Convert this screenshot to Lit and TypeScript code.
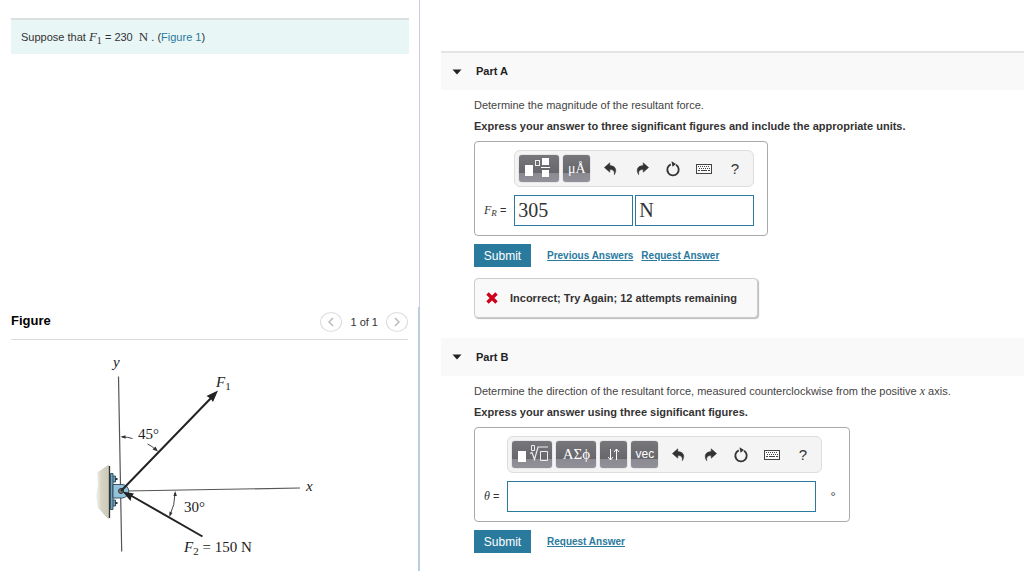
import { LitElement, html, css, svg, nothing } from "lit";
import { customElement, property } from "lit/decorators.js";

const undo = svg`<path d="M5.8 .8 .4 5.6l5.4 4.6V7.600c3.400-.1 5 1.400 4.500 5.200 3-4.600 1.400-9-4.500-9.200z" stroke="#333" stroke-width=".5"/>`;

const icons = {
  undo: html`<svg width="14" height="14" viewBox="0 0 14 14" fill="#333" aria-hidden="true">${undo}</svg>`,
  redo: html`<svg width="14" height="14" viewBox="0 0 14 14" fill="#333" aria-hidden="true"><g transform="translate(14 0) scale(-1 1)">${undo}</g></svg>`,
  reset: html`<svg width="16" height="16" viewBox="0 0 16 16" aria-hidden="true">
    <path d="M11 3.800A5.700 5.700 0 1 1 5.800 3.400" fill="none" stroke="#333" stroke-width="1.800"/>
    <path d="M6.500 .2 11 2.900 7.500 5.700z" fill="#333"/>
  </svg>`,
  keyboard: html`<svg width="16" height="10" viewBox="0 0 16 10" aria-hidden="true">
    <rect x=".5" y=".5" width="15" height="9" fill="#fafafa" stroke="#444"/>
    <path d="M2 2.500h12M3 4.500h11" stroke="#444" stroke-dasharray="1 1" fill="none"/>
    <path d="M2 6.500h2M5 6.500h6M12 6.500h2" stroke="#444" fill="none"/>
  </svg>`,
  fraction: html`<svg width="40" height="27" viewBox="0 0 40 27" aria-hidden="true">
    <path d="M6 10h8v11H6zM23 3h7v7h-7zM23 15h7v7h-7zM22 12h9v1h-9z" fill="#fff"/>
    <rect x="16.5" y="5.5" width="4" height="5" fill="none" stroke="#eee"/>
  </svg>`,
  root: html`<svg width="40" height="27" viewBox="0 0 40 27" aria-hidden="true">
    <path d="M6 10h8v11H6z" fill="#fff"/>
    <path d="M18 12.500l2-1 2.500 7 3.500-12.500h10" fill="none" stroke="#eee" stroke-width="1.2"/>
    <path d="M19.500 4.500h3v5h-3zM28.500 10.500h7v9h-7z" fill="none" stroke="#eee"/>
  </svg>`,
  arrows: html`<svg width="27" height="27" viewBox="0 0 27 27" fill="none" stroke="#fff" aria-hidden="true">
    <path d="M10.500 8v11M8 16l2.500 3 2.500-3M16.500 19V8M14 11l2.500-3 2.500 3"/>
  </svg>`,
};

@customElement("math-toolbar")
class MathToolbar extends LitElement {
  @property() kind = "units";

  static styles = css`
    :host { display: block; }
    .bar {
      display: flex;
      align-items: center;
      box-sizing: border-box;
      height: 37px;
      padding: 0 3px 0 4px;
      border: 1px solid #ddd;
      border-radius: 6px;
      background: #f4f4f4;
    }
    .keys { display: flex; gap: 4px; margin-right: 5px; }
    button {
      display: flex;
      align-items: center;
      justify-content: center;
      padding: 0;
      border: 0;
      background: none;
      color: #333;
      cursor: pointer;
    }
    .key {
      width: 27px;
      height: 27px;
      border-radius: 3px;
      background: linear-gradient(#77767b, #67666b 67%, #8b8a92 68%, #929199);
      box-shadow: 0 0 1px #77767b;
      color: #fff;
      font: 14px/27px "Liberation Serif", serif;
    }
    .wide { width: 40px; }
    .greek { font-size: 15px; }
    .vec { font: 12px/27px "Liberation Sans", sans-serif; }
    .tool { width: 31px; height: 27px; }
    .help { font: 15px/27px "Liberation Sans", sans-serif; }
  `;

  render() {
    return html`
      <div class="bar" role="toolbar">
        <div class="keys">
          ${this.kind === "units"
            ? html`
                <button class="key wide" aria-label="Templates">${icons.fraction}</button>
                <button class="key">μÅ</button>`
            : html`
                <button class="key wide" aria-label="Templates">${icons.root}</button>
                <button class="key wide greek">ΑΣϕ</button>
                <button class="key" aria-label="Arrows">${icons.arrows}</button>
                <button class="key vec">vec</button>`}
        </div>
        <button class="tool" aria-label="Undo">${icons.undo}</button>
        <button class="tool" aria-label="Redo">${icons.redo}</button>
        <button class="tool" aria-label="Reset">${icons.reset}</button>
        <button class="tool" aria-label="Keyboard">${icons.keyboard}</button>
        <button class="tool help">?</button>
      </div>
    `;
  }
}

@customElement("force-figure")
class ForceFigure extends LitElement {
  static styles = css`
    :host { display: block; }
    svg { display: block; }
    text { font: 15px "Liberation Serif", serif; fill: #222; }
    .it { font-style: italic; }
    .sub { font-size: 11px; }
  `;

  render() {
    return html`
      <svg width="397" height="231" viewBox="11 340 397 231" role="img" aria-label="Forces F1 and F2 acting on a bracket">
        <defs>
          <linearGradient id="wall">
            <stop offset="0" stop-color="#dcdacb" stop-opacity=".3"/>
            <stop offset=".4" stop-color="#d6d4c4"/>
            <stop offset="1" stop-color="#cbc8b6"/>
          </linearGradient>
        </defs>
        <path d="M109 465c-5 2-8 6-12 7l1 12-2 12 2 12c4 3 7 9 11 11z" fill="url(#wall)"/>
        <path d="M109.500 466v52" stroke="#333" stroke-width="1.3"/>
        <path d="M118.500 376.500 121.700 551.500M126 491l174-3" stroke="#555" stroke-width="1.2"/>
        <g fill="#6fa5c4" stroke="#2d4554" stroke-width=".9">
          <path d="M112.500 476h3v6h-3zM112.500 500h3v6h-3z"/>
          <path d="M110.500 473.500h2.500v36h-2.500z"/>
          <path d="M113 484.500h9a6.500 6.500 0 0 1 0 13.500h-9z" fill="#92c2dc"/>
        </g>
        <path d="M115 479h2.500M115 503h2.500" stroke="#333" stroke-width="2"/>
        <circle cx="121" cy="491" r="2.5" fill="#777" stroke="#333"/>
        <path d="M121 491 212 397M202.500 536.500 130 495" stroke="#222" stroke-width="2"/>
        <path d="M218 390.500l-5 11.500-2.500-3.500-4-2.500zM122.500 491.500l11.500 2-2.500 3-1 4.500z" fill="#222"/>
        <path d="M132.500 438.500Q128 437 122 437M147.500 444Q152 446 156 450M175 493Q175 505 170 515" fill="none" stroke="#444"/>
        <path d="M120.500 436.800l5-1.500v3.500zM158 451.500l-5.500-2 3-3zM175.200 491l-1.800 5h3.500zM169.300 517l.2-5.500 3 1.500z" fill="#333"/>
        <text x="113" y="367" class="it">y</text>
        <text x="306" y="491" class="it">x</text>
        <text x="216" y="387"><tspan class="it">F</tspan><tspan class="sub" dy="3">1</tspan></text>
        <text x="138" y="439">45°</text>
        <text x="184" y="512">30°</text>
        <text x="184" y="552"><tspan class="it">F</tspan><tspan class="sub" dy="3">2</tspan><tspan dy="-3"> = 150 N</tspan></text>
      </svg>
    `;
  }
}

@customElement("app-root")
class AppRoot extends LitElement {
  static styles = css`
    :host {
      display: block;
      font: 11px/15px "Liberation Sans", Arial, sans-serif;
      color: #444;
      background: #fff;
    }
    * { box-sizing: border-box; }
    a { color: #2a7a9e; }
    p { margin: 0; }
    .page {
      display: grid;
      grid-template-columns: 420px minmax(0, 1fr);
      min-height: 100vh;
    }
    .side { display: flex; flex-direction: column; }
    .problem {
      flex: 1;
      padding: 18px 10px 0 11px;
      border-right: 1px solid #c8cfe0;
    }
    .given {
      padding: 10px;
      border-top: 2px solid #dcdfdf;
      background: #e8f6f6;
      color: #333;
    }
    .given div { line-height: 14px; }
    .given a { text-decoration: none; }
    .math { font: 13px/14px "Liberation Serif", serif; }
    .math i { font-size: 13px; }
    sub { font-size: 10px; line-height: 0; vertical-align: -3px; }
    .figure { border-right: 2px solid #bccde2; padding: 0 10px 0 11px; }
    .figure-head {
      display: flex;
      align-items: center;
      height: 33px;
      padding-bottom: 2px;
      border-bottom: 1px solid #d8dcdc;
    }
    h2 { flex: 1; margin: 0 0 4px; font-size: 13px; color: #000; }
    .pager { display: flex; align-items: center; gap: 8px; color: #333; }
    .round {
      display: flex;
      align-items: center;
      justify-content: center;
      width: 22px;
      height: 20px;
      padding: 0;
      border: 1px solid #ddd;
      border-radius: 50%;
      background: #fff;
    }
    .work { padding: 51px 0 0 21px; }
    .part-head {
      display: flex;
      align-items: center;
      gap: 14px;
      height: 38px;
      padding-left: 11px;
      background: #f9f9f9;
      color: #222;
    }
    .first { height: 39px; border-top: 2px solid #e4e4e4; }
    h3 { margin: 0; font-size: 11px; }
    .part-body { padding: 8px 0 0 33px; }
    section + section { margin-top: 20px; }
    .side section { margin-top: 0; }
    .lead { margin-top: 6px; font-weight: bold; color: #333; }
    .answer {
      display: grid;
      grid-template-columns: max-content max-content max-content;
      row-gap: 8px;
      align-items: center;
      width: max-content;
      margin-top: 7px;
      padding: 8px 13px 9px 9px;
      border: 1px solid #aaa;
      border-radius: 4px;
    }
    math-toolbar { grid-column: 2; }
    .name { grid-column: 1; margin-right: 8px; color: #333; }
    .name .math, .name i, .math .var { font-size: 12px; }
    .name sub, .name sub i { font-size: 9px; vertical-align: -1px; }
    .fields { display: flex; gap: 2px; }
    .unit { margin-left: 8px; font-size: 13px; }
    input {
      width: 119px;
      height: 31px;
      padding: 0 3px;
      border: 1px solid #2a7a9e;
      outline: 0;
      background: #fff;
      color: #333;
      font: 20px "Liberation Serif", serif;
    }
    .long { width: 309px; }
    .actions { display: flex; align-items: center; margin-top: 8px; }
    .submit {
      width: 57px;
      height: 23px;
      margin-right: 16px;
      padding: 0;
      border: 0;
      background: #2a7a9e;
      color: #fff;
      font: 12px "Liberation Sans", sans-serif;
    }
    .actions a { margin-right: 8px; font-weight: bold; font-size: 10px; }
    .feedback {
      display: flex;
      align-items: center;
      gap: 12px;
      width: max-content;
      min-width: 284px;
      height: 40px;
      margin-top: 11px;
      padding: 0 11px;
      border: 1px solid #ccc;
      border-radius: 4px;
      background: #f9f9f9;
      box-shadow: 1px 1px 1px #bbb;
      color: #333;
      font-weight: bold;
    }
  `;

  private head(title: string, first = false) {
    return html`
      <header class="part-head ${first ? "first" : ""}">
        <svg width="10" height="6" viewBox="0 0 10 6" aria-hidden="true"><path d="M.5 .5h9L5 5.500z" fill="#222"/></svg>
        <h3>${title}</h3>
      </header>
    `;
  }

  private actions(previous: boolean) {
    return html`
      <div class="actions">
        <button class="submit">Submit</button>
        ${previous ? html`<a href="#previous">Previous Answers</a>` : nothing}
        <a href="#request">Request Answer</a>
      </div>
    `;
  }

  private chevron(path: string) {
    return html`<svg width="8" height="10" viewBox="0 0 8 10" fill="none" stroke="#bbb" stroke-width="1.5" aria-hidden="true"><path d=${path}/></svg>`;
  }

  render() {
    return html`
      <main class="page">
        <div class="side">
          <section class="problem">
            <div class="given">
              <div>Suppose that <span class="math"><i>F</i><sub>1</sub></span> = 230 &nbsp;<span class="math">N</span> . (<a href="#figure">Figure 1</a>)</div>
            </div>
          </section>
          <section class="figure" id="figure">
            <div class="figure-head">
              <h2>Figure</h2>
              <div class="pager">
                <button class="round" aria-label="Previous figure">${this.chevron("M6 1 2 5l4 4")}</button>
                <span>1 of 1</span>
                <button class="round" aria-label="Next figure">${this.chevron("M2 1l4 4-4 4")}</button>
              </div>
            </div>
            <force-figure></force-figure>
          </section>
        </div>
        <div class="work">
          <section>
            ${this.head("Part A", true)}
            <div class="part-body">
              <p>Determine the magnitude of the resultant force.</p>
              <p class="lead">Express your answer to three significant figures and include the appropriate units.</p>
              <div class="answer">
                <math-toolbar kind="units"></math-toolbar>
                <label class="name" for="force"><span class="math"><i>F</i><sub><i>R</i></sub></span> =</label>
                <div class="fields">
                  <input id="force" value="305" />
                  <input aria-label="Units" value="N" />
                </div>
              </div>
              ${this.actions(true)}
              <div class="feedback" role="status">
                <svg width="12" height="12" viewBox="0 0 12 12" aria-hidden="true"><path d="M1.500 1.500 10.500 10.500M10.500 1.500 1.500 10.500" stroke="#d0021b" stroke-width="3.4"/></svg>
                Incorrect; Try Again; 12 attempts remaining
              </div>
            </div>
          </section>
          <section>
            ${this.head("Part B")}
            <div class="part-body">
              <p>Determine the direction of the resultant force, measured counterclockwise from the positive <span class="math"><i class="var">x</i></span> axis.</p>
              <p class="lead">Express your answer using three significant figures.</p>
              <div class="answer">
                <math-toolbar kind="symbols"></math-toolbar>
                <label class="name" for="angle"><span class="math"><i>θ</i></span> =</label>
                <input class="long" id="angle" />
                <span class="unit">°</span>
              </div>
              ${this.actions(false)}
            </div>
          </section>
        </div>
      </main>
    `;
  }
}
